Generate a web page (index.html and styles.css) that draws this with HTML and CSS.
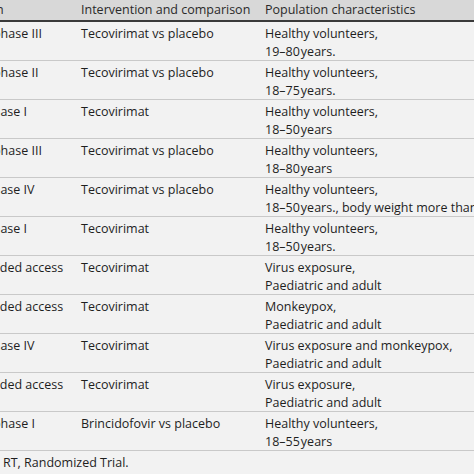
FILE: index.html
```html
<!DOCTYPE html>
<html>
<head>
<meta charset="utf-8">
<link rel="stylesheet" href="styles.css">
</head>
<body>
<div class="page">
  <div class="table">
    <div class="row head">
      <div class="cell">Design</div>
      <div class="cell">Intervention and comparison</div>
      <div class="cell">Population characteristics</div>
    </div>
    <div class="row">
      <div class="cell">RCT, phase III</div>
      <div class="cell">Tecovirimat vs placebo</div>
      <div class="cell">Healthy volunteers,<br>19–80<span class="thin"></span>years.</div>
    </div>
    <div class="row">
      <div class="cell">RCT, phase II</div>
      <div class="cell">Tecovirimat vs placebo</div>
      <div class="cell">Healthy volunteers,<br>18–75<span class="thin"></span>years.</div>
    </div>
    <div class="row">
      <div class="cell">RT, phase I</div>
      <div class="cell">Tecovirimat</div>
      <div class="cell">Healthy volunteers,<br>18–50<span class="thin"></span>years</div>
    </div>
    <div class="row">
      <div class="cell">RCT, phase III</div>
      <div class="cell">Tecovirimat vs placebo</div>
      <div class="cell">Healthy volunteers,<br>18–80<span class="thin"></span>years</div>
    </div>
    <div class="row">
      <div class="cell">RT, phase IV</div>
      <div class="cell">Tecovirimat vs placebo</div>
      <div class="cell">Healthy volunteers,<br>18–50<span class="thin"></span>years., body weight more than 50 kg</div>
    </div>
    <div class="row">
      <div class="cell">RT, phase I</div>
      <div class="cell">Tecovirimat</div>
      <div class="cell">Healthy volunteers,<br>18–50<span class="thin"></span>years.</div>
    </div>
    <div class="row">
      <div class="cell">Expanded access</div>
      <div class="cell">Tecovirimat</div>
      <div class="cell">Virus exposure,<br>Paediatric and adult</div>
    </div>
    <div class="row">
      <div class="cell">Expanded access</div>
      <div class="cell">Tecovirimat</div>
      <div class="cell">Monkeypox,<br>Paediatric and adult</div>
    </div>
    <div class="row">
      <div class="cell">RT, phase IV</div>
      <div class="cell">Tecovirimat</div>
      <div class="cell">Virus exposure and monkeypox,<br>Paediatric and adult</div>
    </div>
    <div class="row">
      <div class="cell">Expanded access</div>
      <div class="cell">Tecovirimat</div>
      <div class="cell">Virus exposure,<br>Paediatric and adult</div>
    </div>
    <div class="row">
      <div class="cell">RCT, phase I</div>
      <div class="cell">Brincidofovir vs placebo</div>
      <div class="cell">Healthy volunteers,<br>18–55<span class="thin"></span>years</div>
    </div>
  </div>
  <div class="note">RT, Randomized Trial.</div>
</div>
</body>
</html>
```
FILE: styles.css
```css
html, body {
  margin: 0;
  padding: 0;
  background: #f2f2f2;
  overflow: hidden;
}
.page {
  width: 474px;
  height: 474px;
  overflow: hidden;
  font-family: "Open Sans", "Noto Sans", sans-serif;
  font-size: 12.5px;
  font-weight: 500;
  color: #1e1e1e;
}
.table {
  margin-left: -42px;
  width: 640px;
}
.row {
  display: grid;
  grid-template-columns: 117px 184px 1fr;
  height: 38px;
  border-bottom: 1px solid #c9c9c9;
  white-space: nowrap;
}
.row.head {
  height: 20px;
  background: #d8d8d8;
  border-bottom: 2px solid #3a3a3a;
  color: #2a2a2a;
}
.cell {
  padding-left: 6px;
  line-height: 18px;
  padding-top: 3px;
}
.head .cell {
  padding-top: 1px;
}
.thin {
  display: inline-block;
  width: 1px;
}
.note {
  padding: 4px 0 0 3px;
  line-height: 16px;
}
```
